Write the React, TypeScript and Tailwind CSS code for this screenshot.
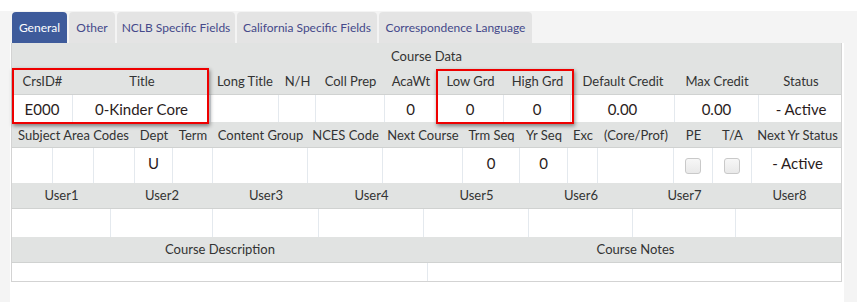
import React from "react";

const font = { fontFamily: "Lato, 'Noto Sans', sans-serif" };

const tabs: [string, string][] = [
  ["General", "w-[55px]"],
  ["Other", "w-[46px]"],
  ["NCLB Specific Fields", "w-[118px]"],
  ["California Specific Fields", "w-[140px]"],
  ["Correspondence Language", "w-[153px]"],
];

function Hd({ children, className = "" }: { children?: React.ReactNode; className?: string }) {
  return <div className={`flex items-center justify-center whitespace-nowrap text-[13px] text-[#333] ${className}`}>{children}</div>;
}
function Dc({ children, className = "" }: { children?: React.ReactNode; className?: string }) {
  return <div className={`flex items-center justify-center whitespace-nowrap border-r border-[#e4e9ee] last:border-r-0 text-[15px] text-[#2a1c1c] ${className}`}>{children}</div>;
}
function Check() {
  return <div className="w-[16px] h-[16px] rounded-[3px] border border-[#c9c9c9] bg-gradient-to-b from-[#f7f7f7] to-[#e9e9e9]" />;
}

export default function App() {
  const row1H = ["CrsID#", "Title", "Long Title", "N/H", "Coll Prep", "AcaWt", "Low Grd", "High Grd", "Default Credit", "Max Credit", "Status"];
  const row1D = ["E000", "0-Kinder Core", "", "", "", "0", "0", "0", "0.00", "0.00", "- Active"];
  const row2H = ["Dept", "Term", "Content Group", "NCES Code", "Next Course", "Trm Seq", "Yr Seq", "Exc", "(Core/Prof)", "PE", "T/A", "Next Yr Status"];
  const grid1 = "grid grid-cols-[61px_138px_68px_37px_69px_52px_67px_67px_104px_84px_84px]";
  const grid2 = "grid grid-cols-[41px_41px_41px_38px_40px_95px_75px_80px_57px_48px_30px_76px_39px_39px_91px]";
  const grid3 = "grid grid-cols-[99px_102px_106px_105px_105px_104px_103px_107px]";
  return (
    <div className="w-[857px] h-[302px] bg-white pt-[11px] overflow-hidden" style={font}>
      <div className="h-[291px] bg-[#f4f4f4] pl-[10px] pr-[13px] flex flex-col">
        <div className="flex gap-[2px] pl-[2px] pt-[1px] h-[32px]">
          {tabs.map(([t, w], i) => (
            <div
              key={t}
              className={`${w} flex items-center justify-center rounded-t-[4px] text-[12px] whitespace-nowrap ${i === 0 ? "bg-[#3e5b9b] text-white" : "bg-[#e4e4e4] text-[#45498a]"}`}
            >
              {t}
            </div>
          ))}
        </div>
        <div className="flex-1 bg-white pl-[1px] pr-[2px]">
          <div className="relative w-[831px] border-x border-b border-[#d3d3d3]">
            <Hd className="h-[26px] bg-[#e1e3e2] pt-[1px]">Course Data</Hd>
            <div className={`${grid1} h-[26px] bg-[#e1e3e2] border-b border-[#d0d2d1] pt-[1px]`}>
              {row1H.map((h) => <Hd key={h}>{h}</Hd>)}
            </div>
            <div className={`${grid1} h-[28px] border-b border-[#e1e3e2]`}>
              {row1D.map((d, i) => <Dc key={i} className="pt-[2px]">{d}</Dc>)}
            </div>
            <div className={`${grid2} h-[25px] bg-[#e1e3e2] border-b border-[#d0d2d1] pt-[2px]`}>
              <Hd className="col-span-3">Subject Area Codes</Hd>
              {row2H.map((h) => <Hd key={h}>{h}</Hd>)}
            </div>
            <div className={`${grid2} h-[35px] bg-white`}>
              <Dc /><Dc /><Dc /><Dc className="pb-[4px]">U</Dc><Dc /><Dc /><Dc /><Dc />
              <Dc className="pb-[4px]">0</Dc><Dc className="pb-[4px]">0</Dc><Dc /><Dc />
              <Dc><Check /></Dc><Dc><Check /></Dc><Dc className="pb-[4px]">- Active</Dc>
            </div>
            <div className={`${grid3} h-[26px] bg-[#e1e3e2] border-b border-[#d0d2d1] pt-[1px]`}>
              {[1, 2, 3, 4, 5, 6, 7, 8].map((n) => <Hd key={n}>User{n}</Hd>)}
            </div>
            <div className={`${grid3} h-[28px]`}>
              {[1, 2, 3, 4, 5, 6, 7, 8].map((n) => <Dc key={n} />)}
            </div>
            <div className="grid grid-cols-[416px_415px] h-[26px] bg-[#e1e3e2] border-b border-[#d0d2d1] pt-[1px]">
              <Hd>Course Description</Hd>
              <Hd>Course Notes</Hd>
            </div>
            <div className="grid grid-cols-[416px_415px] h-[18px]">
              <Dc /><Dc />
            </div>
            <div className="absolute left-0 top-[25px] w-[197px] h-[56px] border-2 border-[#ee0000] shadow-[1px_2px_4px_rgba(0,0,0,0.45)] pointer-events-none" />
            <div className="absolute left-[424px] top-[26px] w-[138px] h-[55px] border-2 border-[#ee0000] shadow-[1px_2px_4px_rgba(0,0,0,0.45)] pointer-events-none" />
          </div>
        </div>
      </div>
    </div>
  );
}
